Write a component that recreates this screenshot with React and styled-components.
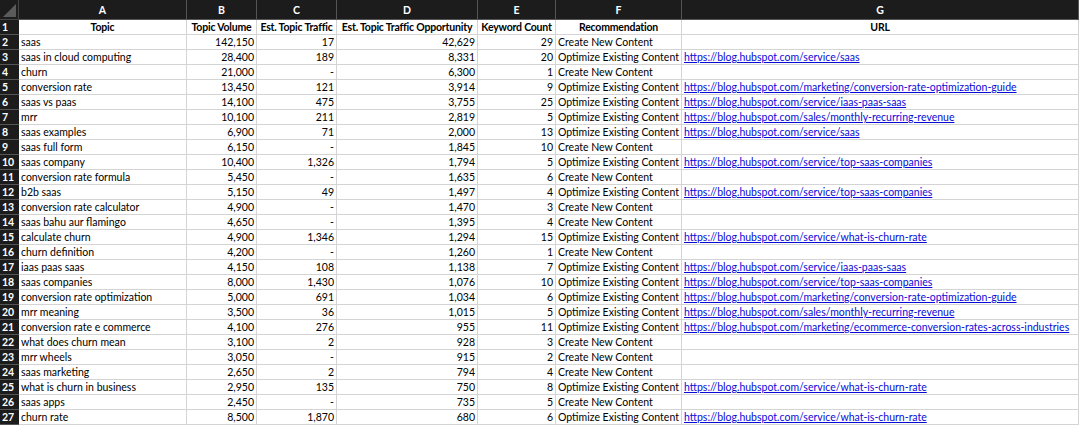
import React from "react";
import styled, { createGlobalStyle } from "styled-components";

const G = createGlobalStyle`
  body { margin: 0; background: #fff; font-family: Lato, "Liberation Sans", sans-serif; }
`;

const Sheet = styled.div`
  display: grid;
  grid-template-columns: 19px 168px 70px 80px 141px 78px 126px 397px;
  grid-auto-rows: 15px;
  grid-template-rows: 20px;
  font-size: 10.5px;
  width: 1079px;
`;
const Corner = styled.div`
  background: #1c1c1c;
  border-right: 1px solid #444;
  border-bottom: 1px solid #444;
  position: relative;
  overflow: hidden;
  &::after {
    content: "";
    position: absolute;
    right: 2px; bottom: 2px;
    border-left: 13px solid transparent;
    border-bottom: 13px solid #5a5a5a;
  }
`;
const ColHead = styled.div`
  background: #1c1c1c;
  color: #fff;
  display: flex; align-items: center; justify-content: center;
  border-right: 1px solid #555;
  border-bottom: 1px solid #555;
  font-weight: 700;
`;
const RowHead = styled.div`
  background: #1c1c1c;
  color: #fff;
  font-weight: 700;
  display: flex; align-items: center; padding-left: 2px;
  border-bottom: 1px solid #555;
`;
const Cell = styled.div`
  border-right: 1px solid #d4d4d4;
  border-bottom: 1px solid #d4d4d4;
  padding: 0 2px;
  display: flex; align-items: center;
  justify-content: ${p => p.$align === "r" ? "flex-end" : p.$align === "c" ? "center" : "flex-start"};
  font-weight: ${p => p.$bold ? 700 : 400};
  letter-spacing: ${p => p.$bold ? "-0.2px" : "0"};
  white-space: nowrap; overflow: hidden;
  color: #000;
  line-height: 1;
`;
const Link = styled.a`
  color: #0a0ad8;
  text-decoration: underline;
`;

const H = "https://blog.hubspot.com/";
const rows = [
  ["saas","142,150","17","42,629","29","Create New Content",""],
  ["saas in cloud computing","28,400","189","8,331","20","Optimize Existing Content","service/saas"],
  ["churn","21,000","-","6,300","1","Create New Content",""],
  ["conversion rate","13,450","121","3,914","9","Optimize Existing Content","marketing/conversion-rate-optimization-guide"],
  ["saas vs paas","14,100","475","3,755","25","Optimize Existing Content","service/iaas-paas-saas"],
  ["mrr","10,100","211","2,819","5","Optimize Existing Content","sales/monthly-recurring-revenue"],
  ["saas examples","6,900","71","2,000","13","Optimize Existing Content","service/saas"],
  ["saas full form","6,150","-","1,845","10","Create New Content",""],
  ["saas company","10,400","1,326","1,794","5","Optimize Existing Content","service/top-saas-companies"],
  ["conversion rate formula","5,450","-","1,635","6","Create New Content",""],
  ["b2b saas","5,150","49","1,497","4","Optimize Existing Content","service/top-saas-companies"],
  ["conversion rate calculator","4,900","-","1,470","3","Create New Content",""],
  ["saas bahu aur flamingo","4,650","-","1,395","4","Create New Content",""],
  ["calculate churn","4,900","1,346","1,294","15","Optimize Existing Content","service/what-is-churn-rate"],
  ["churn definition","4,200","-","1,260","1","Create New Content",""],
  ["iaas paas saas","4,150","108","1,138","7","Optimize Existing Content","service/iaas-paas-saas"],
  ["saas companies","8,000","1,430","1,076","10","Optimize Existing Content","service/top-saas-companies"],
  ["conversion rate optimization","5,000","691","1,034","6","Optimize Existing Content","marketing/conversion-rate-optimization-guide"],
  ["mrr meaning","3,500","36","1,015","5","Optimize Existing Content","sales/monthly-recurring-revenue"],
  ["conversion rate e commerce","4,100","276","955","11","Optimize Existing Content","marketing/ecommerce-conversion-rates-across-industries"],
  ["what does churn mean","3,100","2","928","3","Create New Content",""],
  ["mrr wheels","3,050","-","915","2","Create New Content",""],
  ["saas marketing","2,650","2","794","4","Create New Content",""],
  ["what is churn in business","2,950","135","750","8","Optimize Existing Content","service/what-is-churn-rate"],
  ["saas apps","2,450","-","735","5","Create New Content",""],
  ["churn rate","8,500","1,870","680","6","Optimize Existing Content","service/what-is-churn-rate"],
];
const heads = ["Topic","Topic Volume","Est. Topic Traffic","Est. Topic Traffic Opportunity","Keyword Count","Recommendation","URL"];

export default function App() {
  return (
    <>
      <G />
      <Sheet>
        <Corner />
        {["A","B","C","D","E","F","G"].map(l => <ColHead key={l}>{l}</ColHead>)}
        <RowHead>1</RowHead>
        {heads.map(h => <Cell key={h} $align="c" $bold>{h}</Cell>)}
        {rows.map((r, i) => (
          <React.Fragment key={i}>
            <RowHead>{i + 2}</RowHead>
            <Cell>{r[0]}</Cell>
            <Cell $align="r">{r[1]}</Cell>
            <Cell $align="r">{r[2]}</Cell>
            <Cell $align="r">{r[3]}</Cell>
            <Cell $align="r">{r[4]}</Cell>
            <Cell>{r[5]}</Cell>
            <Cell>{r[6] && <Link href="#">{H + r[6]}</Link>}</Cell>
          </React.Fragment>
        ))}
      </Sheet>
    </>
  );
}
